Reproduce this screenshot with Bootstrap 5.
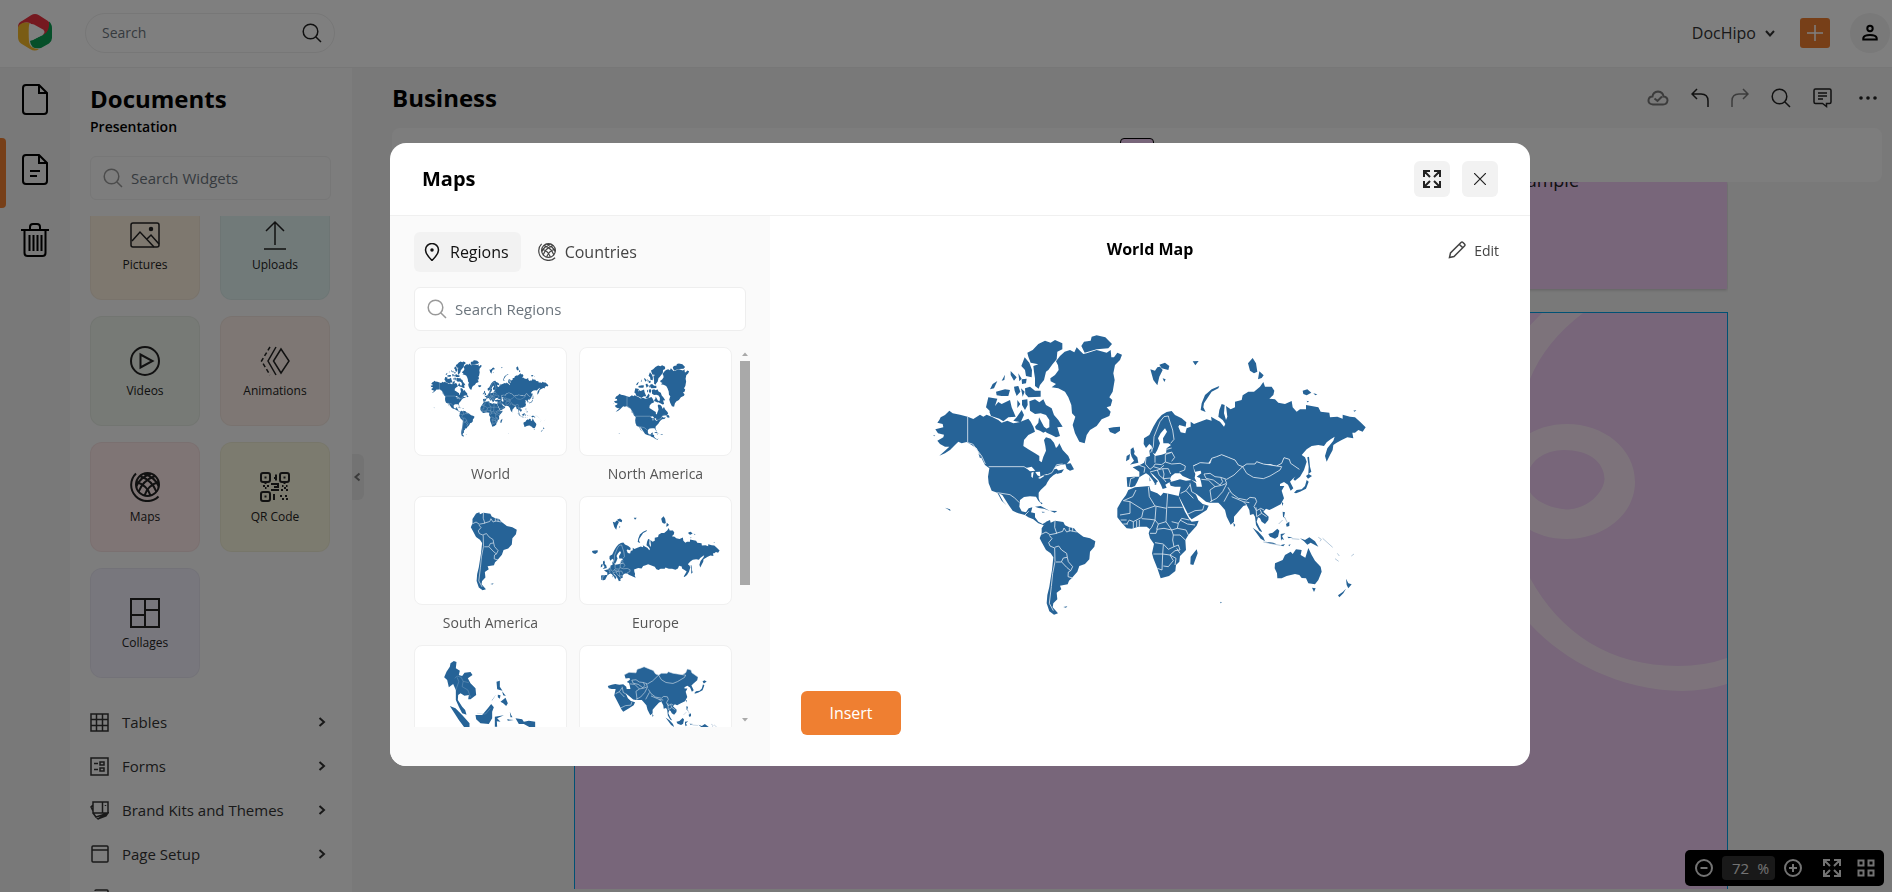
<!DOCTYPE html>
<html lang="en">
<head>
<meta charset="utf-8">
<meta name="viewport" content="width=device-width, initial-scale=1">
<title>DocHipo – Business</title>
<link rel="stylesheet" href="https://cdn.jsdelivr.net/npm/bootstrap@5.3.0/dist/css/bootstrap.min.css">
<style>
  body { font-family: "Open Sans", "Noto Sans", sans-serif; font-size: 14px; color: #222; background: #f2f2f2; height: 100vh; overflow: hidden; }
  svg { display: block; flex: none; }
  .ico { fill: none; stroke: currentColor; stroke-width: 1.5; }
  .ico-bold { stroke-width: 2; }
  .bare { border: 0; background: none; padding: 0; color: inherit; }
  input::placeholder { color: #6c757d; opacity: 1; }
  input:focus { outline: 0; }

  .topbar { height: 68px; background: #fff; border-bottom: 1px solid #eee; padding: 0 2px 2px 18px; }
  .top-search { width: 250px; height: 40px; margin-left: 33px; padding: 0 12px 0 16px; border: 1px solid #eee; border-radius: 20px; }
  .plain-input { border: 0; background: transparent; min-width: 0; padding: 0; color: #222; }
  .account { font-size: 16px; color: #333; }
  .add-btn { width: 30px; height: 30px; border-radius: 3px; background: #ef7f31; color: #fff; }
  .avatar { width: 40px; height: 40px; margin-left: 20px; background: #f2f2f2; color: #000; }

  .rail { width: 70px; background: #f2f2f2; color: #000; }
  .rail a { height: 70px; padding-bottom: 7px; color: #000; position: relative; }
  .rail a.current::before { content: ""; position: absolute; left: 0; top: 0; bottom: 0; width: 6px; background: #ef7f31; border-radius: 0 4px 4px 0; }

  .side { width: 282px; background: #fbfbfb; padding: 15px 20px 0; position: relative; }
  .side h1, .main h2 { font-size: 24px; line-height: 32px; font-weight: 700; color: #000; }
  .side .kind { font-size: 14px; line-height: 20px; margin-top: 2px; font-weight: 600; color: #000; }
  .widget-search { height: 44px; border: 1px solid #eee; border-radius: 6px; padding: 0 12px; font-size: 15px; color: #999; margin: 19px 1px 16px 0; }
  .side-scroll { overflow: hidden; }
  .tiles { display: grid; grid-template-columns: 110px 110px; gap: 16px 20px; margin-top: -26px; }
  .tile { height: 110px; border: 1px solid rgba(0,0,0,.04); border-radius: 12px; font-size: 12px; line-height: 16px; color: #222; gap: 7px; padding: 3px 0 0; }
  .t-pic { background: #fcf0df; } .t-up { background: #e3f5f3; } .t-vid { background: #eef4ec; } .t-ani { background: #fcefe8; }
  .t-map { background: #ffeaea; } .t-qr { background: #f9f7de; } .t-col { background: #f1effb; }
  .menu-list { margin-top: 22px; }
  .menu-row { height: 44px; font-size: 15px; color: #333; gap: 13px; text-decoration: none; padding-right: 5px; }
  .fold { position: absolute; left: 100%; top: 386px; width: 12px; height: 46px; background: #e6e6e6; border-radius: 0 6px 6px 0; color: #777; }

  .main { padding: 0 10px 0 40px; }
  .main-head { height: 60px; padding-right: 4px; color: #222; gap: 22px; }
  .toolbar { height: 54px; background: #fbfbfb; border-radius: 8px; padding-top: 10px; position: relative; z-index: 1; }
  .chip { width: 34px; height: 30px; border: 1px solid #000; border-radius: 4px; background: #f0ccf4; }
  .slides { margin: 0 154px 0 182px; min-height: 0; overflow: hidden; }
  .slide-a { height: 107px; background: #f0ccf4; box-shadow: 0 1px 3px rgba(0,0,0,.2); padding-right: 148px; font-size: 18px; line-height: 24px; color: #222; overflow: hidden; margin-right: 1px; }
  .slide-a p { margin-top: -14px; }
  .slide-b { height: 577px; margin-top: 23px; background: #f0ccf4; border: 1px solid #00a2e8; border-bottom: 0; position: relative; overflow: hidden; }
  .slide-b svg { position: absolute; right: 0; top: 0; }

  .zoombar { position: fixed; right: 8px; bottom: 6px; height: 36px; background: #000; border-radius: 5px; color: #e6e6e6; padding: 0 9px; z-index: 2; }
  .zoombar label { width: 53px; height: 24px; background: #333; border-radius: 4px; font-size: 14px; margin: 0 8px; padding: 0 6px 0 10px; }
  .zoombar input { width: 19px; color: #e6e6e6; font-size: 15px; }

  .maps { padding: 17px 0 0 28px; overflow: hidden; }
  .maps .modal-content { border: 0; border-radius: 16px; overflow: hidden; color: #222; }
  .maps .modal-header { padding: 18px 32px; height: 73px; border-bottom: 1px solid #f0f0f0; }
  .maps .modal-title { font-size: 20px; line-height: 28px; font-weight: 700; color: #000; }
  .sq { width: 36px; height: 36px; background: #f2f2f2; border-radius: 6px; color: #222; }
  .picker { width: 380px; background: #fafafa; padding: 16px 20px 39px 24px; }
  .tab { height: 40px; border-radius: 6px; font-size: 16px; color: #444; gap: 9px; padding: 0 12px 0 9px; }
  .tab.on { background: #f2f2f2; color: #111; }
  .region-search { height: 44px; background: #fff; border: 1px solid #eee; border-radius: 6px; padding: 0 12px; font-size: 15px; color: #999; margin: 15px 4px 16px 0; gap: 8px; }
  .regions { height: 380px; overflow: hidden; display: grid; grid-template-columns: 153px 153px; grid-auto-rows: 149px; column-gap: 12px; }
  .region { display: flex; flex-direction: column; align-items: center; font-size: 14px; line-height: 20px; color: #555; }
  .region svg { width: 100%; height: 109px; background: #fff; border: 1px solid #f0f0f0; border-radius: 8px; margin-bottom: 8px; }
  .track { width: 10px; height: 380px; color: #a9a9a9; }
  .track i { width: 10px; height: 224px; background: #a9a9a9; }
  .preview { padding: 22px 31px 31px; }
  .preview-head { display: grid; grid-template-columns: 1fr auto 1fr; height: 24px; }
  .preview h3 { grid-column: 2; font-size: 16px; line-height: 22px; font-weight: 700; color: #000; }
  .preview .world { margin-top: 58px; }
  .edit { height: 24px; font-size: 14px; gap: 8px; color: #444; }
  .insert { width: 100px; height: 44px; border: 0; border-radius: 6px; background: #ef7f31; color: #fff; font-size: 16px; }
  .land { fill: #266397; }
  .lines { fill: none; stroke: #dfe8f0; stroke-width: 2.5; stroke-linejoin: round; }
</style>
</head>
<body class="d-flex flex-column">

<!-- shared shapes -->
<svg width="0" height="0" class="position-absolute" aria-hidden="true">
  <defs>
    <symbol id="s-search" viewBox="0 0 20 20"><path d="M8.500 1.200a7.300 7.300 0 1 0 0 14.600a7.300 7.300 0 1 0 0-14.600M13.700 13.700L19 19"/></symbol>
    <symbol id="s-right" viewBox="0 0 10 12"><path d="M2.500 2l4.500 4l-4.500 4"/></symbol>
    <symbol id="s-globe" viewBox="0 0 30 30">
      <circle cx="17.500" cy="12.500" r="11.500"/><path d="M6 1.500A15 15 0 0 0 28.500 24.500"/>
      <path d="M10 4C18 7 24 13 26.500 20M6.500 10C13 12 18.500 17 20.500 23.500M14 1.800C21 4 26 8 28.500 14M25 4C17 7 11 13 8.500 20M28.500 10C22 12 16.500 17 14.500 23.500M21 1.800C14 4 9 8 6.500 14"/>
    </symbol>
    <symbol id="s-expand" viewBox="0 0 18 18"><path d="M1 7V1h6M1 1l6 6M11 1h6v6M17 1l-6 6M1 11v6h6M1 17l6-6M17 11v6h-6M17 17l-6-6"/></symbol>

    <g id="north" class="land">
      <path d="M62,292L75,285L88,272L98,280L120,284L143,290L160,297L180,284L190,290L200,284L215,290L235,300L245,308L262,302L280,310L300,306L315,300L325,296L332,305L340,320L345,335L325,345L312,360L310,378L325,388L345,400L358,408L358,422L365,427L370,410L378,392L376,378L372,360L378,352L392,356L402,368L408,384L414,378L418,370L428,390L445,408L450,420L440,432L425,434L410,438L400,448L410,446L418,455L400,466L390,475L382,487L378,495L362,510L356,518L356,535L361,548L355,542L348,530L330,529L312,531L300,540L298,560L305,574L318,577L326,565L337,562L333,577L345,580L345,592L355,605L368,612L378,606L372,616L355,610L340,598L325,592L315,585L295,580L278,572L268,558L255,538L247,525L236,520L250,545L260,556L245,542L232,518L215,512L206,490L204,470L208,445L195,435L190,425L180,405L170,385L150,372L140,366L125,370L115,365L105,375L90,390L75,400L58,407L75,392L88,380L75,380L60,372L52,362L70,352L72,344L54,340L46,328L70,322L68,312L52,308L58,300Z"/>
      <path d="M205,232L232,236L225,258L210,274L198,262ZM225,258L235,246L245,252L270,240L275,262L287,290L265,292L250,304L238,296L213,288L208,275ZM228,215L255,208L270,210L265,228L245,228L230,226ZM210,208L218,192L232,183L222,205ZM245,182L255,164L253,180ZM272,153L290,172L282,182L272,165ZM282,200L295,198L301,215L290,228L284,212ZM295,160L305,176L298,184ZM305,178L320,176L318,190L306,192ZM315,205L330,200L345,212L362,212L362,230L325,232L316,222ZM303,205L314,215L308,230ZM292,240L301,252L292,264ZM306,240L322,238L323,255L315,270L306,255ZM290,292L305,270L312,285L302,307L280,302Z"/>
      <path d="M328,244L345,238L358,247L370,238L378,255L395,265L402,285L415,300L428,320L412,322L420,348L408,352L395,345L380,338L372,330L388,322L388,300L378,285L362,280L345,282L330,272ZM345,320L355,308L357,292L372,320L385,330L370,338L360,332L348,328Z"/>
      <path d="M355,72L375,62L392,68L405,60L427,70L427,88L412,95L410,118L398,132L385,150L378,155L372,180L360,195L356,206L345,198L345,175L342,155L340,138L355,133L332,128L325,110L322,98L338,90ZM314,112L328,128L336,150L335,172L318,168L315,150L304,138Z"/>
      <path d="M436,432L452,430L462,448L450,452L440,446ZM412,452L432,448L425,458L410,462ZM345,560L362,558L380,568L390,573L372,566L356,564ZM390,572L412,573L404,578ZM365,575L376,576L368,578ZM360,545L368,550L364,553ZM40,345L46,347L42,349ZM75,563L90,568L92,573ZM175,400L184,412L180,415Z"/>
      <path d="M391,175L405,165L416,150L414,136L408,124L420,108L434,95L450,90L463,97L470,82L480,92L490,102L500,100L530,90L560,98L572,90L574,112L582,112L592,98L606,104L600,120L585,135L580,160L584,180L578,215L568,232L577,240L572,258L560,262L572,275L568,288L545,298L530,318L510,330L500,345L494,370L478,365L465,340L458,315L466,290L456,280L454,255L445,232L435,215L415,205L395,202L408,192L392,184ZM494,98L484,78L492,65L512,62L515,50L530,46L556,52L576,72L565,85L530,88Z"/>
      <path fill="#fff" d="M318,444L335,440L346,452L330,454ZM334,458L341,455L338,474L334,470ZM346,456L360,455L361,470L352,466ZM354,474L370,466L372,469L360,476ZM368,466L382,462L382,465Z"/>
      <path class="lines" d="M143,290V368L158,372L185,408L196,432M206,440H312L322,446M382,464L396,458L410,434L428,432M232,518L270,524L284,534L298,548M315,585L326,574"/>
    </g>

    <g id="south" class="land">
      <path d="M365,625L378,605L390,600L392,608L405,602L430,606L435,616L448,622L462,625L470,635L490,650L510,655L526,664L523,680L510,695L508,718L495,732L478,738L472,755L455,775L447,782L443,793L420,797L424,808L410,818L412,838L400,850L398,862L414,880L402,884L388,874L380,850L382,825L388,800L392,775L396,750L400,712L392,700L378,690L366,668L359,655L365,640ZM430,861L442,859L438,863Z"/>
      <path class="lines" d="M405,602L404,622L410,640L390,644L378,636L364,643M408,640L428,634L432,624L440,636L450,632L470,636M448,622V634M458,624V634M388,646L396,656L386,668L390,678L404,684L405,725L398,760L394,800L388,850L400,872M404,682L416,678L425,690L440,700L442,712L430,714L424,726L408,726M442,712L445,725L458,740L452,752L440,742L425,726M452,752L445,756L444,770L458,774"/>
    </g>

    <g id="europe" transform="translate(540)" class="land">
      <path d="M82,500L80,472L102,470L118,470L118,455L98,442L118,436L132,428L138,412L150,408L148,392L154,385L158,398L165,408L185,404L198,400L200,385L213,375L205,370L190,370L189,355L201,335L195,325L182,340L174,355L180,370L172,390L165,402L158,398L155,378L148,372L138,384L131,372L132,355L148,345L160,320L172,300L185,285L200,276L215,273L225,285L245,295L259,307L257,320L238,315L235,320L242,337L256,340L260,325L272,320L272,305L282,312L300,305L320,298L335,302L333,290L350,300L360,305L372,320L376,312L368,300L355,290L358,270L365,252L374,255L372,280L378,300L382,290L378,258L392,268L405,262L405,245L425,240L428,226L445,215L462,215L480,200L490,186L495,200L515,200L523,212L520,225L508,236L525,238L535,248L555,252L575,243L578,262L590,275L600,268L618,268L618,255L655,262L662,275L688,278L690,292L712,290L728,296L728,284L750,290L765,292L780,305L797,322L788,335L775,330L765,338L757,338L760,355L742,352L725,360L710,368L700,375L698,390L690,405L680,425L675,408L682,385L700,362L704,350L692,358L680,367L672,378L655,375L635,378L620,388L605,405L615,412L620,425L612,450L600,470L585,482L580,478L598,448L585,440L570,430L568,418L552,413L545,430L530,438L510,432L490,432L470,425L465,432L440,432L428,440L415,435L405,420L385,412L365,404L350,410L335,415L325,430L305,428L280,436L282,452L286,462L284,474L290,486L275,480L262,474L248,468L240,460L225,460L214,468L210,478L214,484L203,490L196,494L200,503L188,507L183,495L175,480L160,464L150,457L160,470L174,484L165,492L158,480L146,465L138,460L130,464L118,472L112,485L105,498L95,502ZM148,470L152,482L149,484ZM162,492L170,490L168,495Z"/>
      <path d="M25,325L40,322L60,320L60,332L45,342L30,336ZM92,388L100,382L104,395L102,402L112,412L115,428L98,432L90,434L102,422L95,410L92,400ZM80,408L90,402L88,418L78,424ZM151,148L165,152L172,142L180,140L188,150L178,170L172,196L160,180ZM178,134L195,128L208,138L205,150L185,145ZM188,175L197,178L193,186ZM278,124L296,123L286,136ZM302,270L305,250L315,225L335,208L358,198L355,205L335,215L322,235L312,250L310,262L317,276ZM444,130L458,114L468,130L472,155L462,160L450,152ZM474,178L478,154L491,166L485,174ZM608,212L622,208L634,218L620,226L610,222ZM640,220L652,223L646,226ZM620,242L628,245L622,247ZM760,272L769,270L764,275ZM622,412L627,410L630,440L634,455L625,462L626,440Z"/>
      <path class="lines" d="M152,398L160,380L162,350L170,330L180,305L192,290L205,288M205,288L208,300L218,330L222,358L212,370M138,412L136,432L150,448L160,440L165,432L185,434L196,426L196,404M165,408L165,428M118,436L135,442L132,458M196,426L215,432L240,430L256,438L254,450L238,456M196,404L215,396L224,412L215,424M160,440L180,446L192,436M150,456L172,450L188,446L205,446L212,462M172,450L178,466L190,476L212,474M188,446L192,462L190,476L198,486M104,472L92,476L88,500M200,388L215,384M198,400L214,398"/>
    </g>

    <g id="asia" transform="translate(540)" class="land">
      <path d="M208,487L225,482L240,478L258,482L275,480L288,490L290,500L306,500L303,485L300,474L290,470L304,460L302,452L285,455L280,438L300,428L330,430L335,415L350,410L365,404L385,412L405,420L415,435L428,440L440,432L465,432L470,425L490,432L530,438L545,430L552,413L568,418L572,430L598,448L595,462L580,475L570,485L580,505L572,512L564,494L552,486L540,492L540,498L553,498L545,512L552,535L542,553L522,563L508,570L498,566L490,575L506,590L505,600L495,612L485,605L480,595L474,592L470,605L478,622L487,636L478,632L468,615L465,590L460,582L450,585L448,570L440,555L430,558L415,575L402,590L402,605L392,614L380,590L375,570L362,555L355,548L330,548L318,545L300,530L286,520L295,540L308,552L326,557L320,570L300,583L275,598L268,590L245,545L236,528L242,500L225,500L212,497Z"/>
      <path d="M400,608L406,615L402,621ZM582,518L590,510L605,508L615,498L620,480L626,485L618,506L600,515L588,520ZM618,468L626,462L636,468L624,476ZM458,623L475,635L490,652L495,664L482,656L470,640ZM505,642L518,638L532,626L538,632L534,650L525,656L510,650ZM495,665L520,668L530,673L512,671ZM542,642L556,640L546,648L552,660L546,657L543,662ZM548,575L555,577L552,590L558,596L549,590ZM558,612L568,605L568,618L560,620ZM600,655L615,660L628,652L645,664L655,680L632,668L622,674L612,664ZM545,545L550,550L547,558ZM562,650L578,652L566,655ZM540,676L555,672L550,679ZM565,675L572,673L568,679Z"/>
      <path fill="none" stroke="#8fadc8" stroke-width="2" d="M536,612L548,600M554,592L562,608M575,656L598,658M655,652L664,658L660,664M668,655L698,682M490,666L540,676"/>
      <path class="lines" d="M280,438L300,428L330,430L335,415L350,410L365,404L385,412L405,420L415,435L428,440L440,432L465,432L470,425L490,432L530,438L545,430L552,413L568,418L572,430L598,448M312,462L330,460L345,470L362,472L380,478L402,465L428,440M428,440L440,460L460,472L490,476L510,468L540,450L545,440L530,438M312,462L318,475L340,480L360,495L368,485L362,472M304,478L325,480L345,500L330,510L335,545M345,500L365,496L380,490L375,478M380,492L368,515L350,535L330,545M384,502L395,520L415,535L440,540L450,532L466,534L470,545L462,560L470,572L482,565L492,570M372,545L388,515M395,530L430,545L440,555M430,545L448,548M270,490L275,515L292,525M242,520L258,512L270,495M258,512L280,535M262,583L285,572L308,570L312,556M468,562L470,590L485,580L480,568M485,580L500,590"/>
    </g>

    <g id="africa" transform="translate(540)" class="land">
      <path d="M85,510L105,502L148,498L152,512L172,520L182,528L190,518L210,522L236,528L240,540L255,575L268,598L275,605L296,602L290,617L265,645L256,660L258,690L240,708L238,725L228,735L226,753L207,768L182,775L172,745L160,715L156,700L162,672L150,655L146,640L150,628L140,620L115,620L95,626L80,625L65,608L52,592L52,565L65,542L78,525ZM290,688L293,700L280,735L271,733L272,710Z"/>
      <path class="lines" d="M108,510L98,530L70,542L90,545L90,580L60,585M90,545L130,570L165,558L148,530L145,500M165,558L200,565L203,520M203,562H248M200,565L198,605L175,612L165,600L168,560M130,570L125,592L100,605L88,600L80,612M100,605V625M110,602V622M118,600V620M125,596L150,598L165,600M165,600L155,622L148,630M175,612L170,628L192,625L215,630L198,605M215,605L235,610L232,625L215,630L220,645L218,660L222,680L205,688L190,672L165,668M235,610L245,595L268,600M240,600L262,612L285,615M232,625L258,630L265,645M220,645H240L256,660M160,702H188L190,675M188,702L186,750L172,745M188,702L210,705L225,692L240,690L235,675L222,680M210,705L228,715L225,735M190,738L205,740L220,722L210,705M240,700L230,685M62,600L80,600M70,612L84,612M150,640H168L172,628"/>
    </g>

    <g id="oceania" transform="translate(540)" class="land">
      <path d="M525,730L548,720L555,705L572,695L578,702L588,688L605,690L602,705L616,713L625,684L635,705L645,722L662,740L665,755L655,780L645,793L625,790L618,775L605,774L598,765L585,762L560,768L545,775L532,775L531,760L524,745ZM636,803L647,805L642,816ZM738,776L745,790L755,793L745,805L740,795ZM738,806L730,820L718,832L714,826L728,816ZM360,845L366,848L362,850Z"/>
      <path fill="none" stroke="#8fadc8" stroke-width="2" d="M705,716L716,724M712,700L718,708M754,708L762,702"/>
    </g>
  </defs>
</svg>

<header class="topbar d-flex align-items-center flex-shrink-0">
  <a href="#" aria-label="Home">
    <svg width="34" height="37" viewBox="0 0 34 37"><path fill="#ea3340" d="M0 14C0 10 1 8.500 4 7L13 1.200Q17 -1 21 1.200L30 7Q33 9 32 14Q30 20 25 21L12 9Q5 7 0 14Z"/><path fill="#f5b829" d="M0 13Q3 7 12 9Q10 10 11 28Q12 35 21 35Q17 38 12 35L3 29.500Q0 27 0 23Z"/><path fill="#0c9e52" d="M31 7.500Q34 10 34 14V24Q34 27 31 29.500L23 34Q13 36 12 27L25 21Q32 18 31 7.500Z"/><path fill="#fff" d="M11.500 13Q12 8.500 16 10.500L25 15.500Q28 18 25 20.500L15 26Q11.500 27 11.500 23Z"/></svg>
  </a>
  <div class="top-search d-flex align-items-center">
    <input class="plain-input flex-grow-1" type="text" placeholder="Search" aria-label="Search">
    <button class="bare" aria-label="Search"><svg class="ico" width="20" height="20"><use href="#s-search"/></svg></button>
  </div>
  <button class="bare account ms-auto d-flex align-items-center me-4">DocHipo
    <svg class="ico ico-bold ms-2" width="12" height="12" viewBox="0 0 12 12"><path d="M2 4l4 4.500l4-4.500"/></svg></button>
  <button class="bare add-btn d-flex align-items-center justify-content-center" aria-label="Add"><svg class="ico" width="18" height="18" viewBox="0 0 18 18"><path d="M9 1v16M1 9h16"/></svg></button>
  <button class="bare avatar rounded-circle d-flex align-items-center justify-content-center" aria-label="Account"><svg class="ico ico-bold" width="18" height="18" viewBox="0 0 18 18"><circle cx="9" cy="4.500" r="2.700"/><path d="M2.300 15.500v-1.500c1-4 12.400-4 13.400 0v1.500z"/></svg></button>
</header>

<div class="d-flex flex-grow-1 overflow-hidden">
  <nav class="rail d-flex flex-column flex-shrink-0" aria-label="Sections">
    <a href="#" class="d-flex align-items-center justify-content-center" aria-label="Files"><svg class="ico ico-bold" width="26" height="31" viewBox="0 0 26 31"><path d="M4 1h13l8 8v18q0 3-3 3H4q-3 0-3-3V4q0-3 3-3zM17 1v8h8"/></svg></a>
    <a href="#" class="current d-flex align-items-center justify-content-center" aria-label="Documents"><svg class="ico ico-bold" width="26" height="31" viewBox="0 0 26 31"><path d="M4 1h13l8 8v18q0 3-3 3H4q-3 0-3-3V4q0-3 3-3zM17 1v8h8M8 17h10M8 22h7"/></svg></a>
    <a href="#" class="d-flex align-items-center justify-content-center" aria-label="Trash"><svg class="ico ico-bold" width="28" height="34" viewBox="0 0 28 34"><path d="M0 7h28M3.500 7v23q0 3 3 3h15q3 0 3-3V7M9 7V4q0-3 3-3h4q3 0 3 3v3M8.500 12v16M12.500 12v16M16.500 12v16M20.500 12v16"/></svg></a>
  </nav>

  <aside class="side d-flex flex-column flex-shrink-0">
    <h1 class="mb-0">Documents</h1>
    <div class="kind">Presentation</div>
    <div class="widget-search d-flex align-items-center gap-2 flex-shrink-0">
      <svg class="ico" width="20" height="20"><use href="#s-search"/></svg>
      <input class="plain-input flex-grow-1" type="text" placeholder="Search Widgets" aria-label="Search Widgets">
    </div>
    <div class="side-scroll flex-grow-1">
      <div class="tiles">
        <button class="tile t-pic d-flex flex-column align-items-center justify-content-center"><svg class="ico" width="30" height="30" viewBox="0 0 30 30"><rect x="1" y="3" width="28" height="24" rx="2"/><circle cx="21" cy="9" r="1.500" fill="currentColor"/><path d="M2 21l8-9l14 15M17 19l4-4l8 9"/></svg>Pictures</button>
        <button class="tile t-up d-flex flex-column align-items-center justify-content-center"><svg class="ico" width="30" height="30" viewBox="0 0 30 30"><path d="M15 25V2M6 11l9-9l9 9M4 29h22"/></svg>Uploads</button>
        <button class="tile t-vid d-flex flex-column align-items-center justify-content-center"><svg class="ico ico-bold" width="30" height="30" viewBox="0 0 30 30"><circle cx="15" cy="15" r="14"/><path d="M10.500 8.500v13l12-6.500z"/></svg>Videos</button>
        <button class="tile t-ani d-flex flex-column align-items-center justify-content-center"><svg class="ico" width="30" height="30" viewBox="0 0 30 30"><path d="M21 3l8 12l-8 12l-7.500-12zM16 1L8 15l8 14"/><path stroke-dasharray="4 2.500" d="M10 1L1.500 15L10 29"/></svg>Animations</button>
        <button class="tile t-map d-flex flex-column align-items-center justify-content-center"><svg class="ico ico-bold" width="30" height="30"><use href="#s-globe"/></svg>Maps</button>
        <button class="tile t-qr d-flex flex-column align-items-center justify-content-center"><svg class="ico ico-bold" width="30" height="30" viewBox="0 0 30 30"><rect x="1" y="1" width="9" height="9" rx="2"/><rect x="20" y="1" width="9" height="9" rx="2"/><rect x="1" y="20" width="9" height="9" rx="2"/><path d="M4.500 5.500h2M23.500 5.500h2M4.500 24.500h2M14 6h3M16 2.500v6M5.500 10v2M3 14h2M7 14h2M5 16h1.500M11 12h8M18 12v3h-4M11 18h8M14 22v6M24.500 10v2M22 14h1.500M26 14h1.500M21 18h2M24 16h2M26 18h2M20 24h2M25 24h2M22 27h2M26 27h2"/></svg>QR Code</button>
        <button class="tile t-col d-flex flex-column align-items-center justify-content-center"><svg class="ico ico-bold" width="30" height="30" viewBox="0 0 30 30"><path d="M1 1h28v28H1zM15 1v28M1 17h14M15 12h14"/></svg>Collages</button>
      </div>
      <div class="menu-list">
        <a href="#" class="menu-row d-flex align-items-center"><svg class="ico" width="19" height="19" viewBox="0 0 19 19"><path d="M1 1h17v17H1zM1 6.500h17M1 12.500h17M6.500 1v17M12.500 1v17"/></svg>Tables<svg class="ico ico-bold ms-auto" width="10" height="12"><use href="#s-right"/></svg></a>
        <a href="#" class="menu-row d-flex align-items-center"><svg class="ico" width="19" height="19" viewBox="0 0 19 19"><path d="M1 1h17v17H1zM10 5h4v3h-4zM10 11h4v3h-4zM4 6.500h4M4 12.500h4"/></svg>Forms<svg class="ico ico-bold ms-auto" width="10" height="12"><use href="#s-right"/></svg></a>
        <a href="#" class="menu-row d-flex align-items-center"><svg class="ico" width="19" height="19" viewBox="0 0 19 19"><path d="M3 1h15v11H3zM12.500 1v11M15.500 4v1M3 4L1 6l2 4M3 12l3 4l12-4l-2 3l-8 3l-3-3M8 18l8-5"/></svg>Brand Kits and Themes<svg class="ico ico-bold ms-auto" width="10" height="12"><use href="#s-right"/></svg></a>
        <a href="#" class="menu-row d-flex align-items-center"><svg class="ico" width="19" height="19" viewBox="0 0 19 19"><path d="M2 2q0-1 1-1h14q1 0 1 1v14q0 1-1 1H3q-1 0-1-1zM2 5h16"/></svg>Page Setup<svg class="ico ico-bold ms-auto" width="10" height="12"><use href="#s-right"/></svg></a>
        <a href="#" class="menu-row d-flex align-items-center" aria-label="More settings"><svg class="ico" width="19" height="19" viewBox="0 0 19 19"><path d="M5 2q0-1 1-1h11q1 0 1 1v16M5 4H2q-1 0-1 1v13"/></svg></a>
      </div>
    </div>
    <button class="bare fold d-flex align-items-center" aria-label="Collapse panel"><svg class="ico ico-bold" width="10" height="12" viewBox="0 0 10 12"><path d="M7.500 2.500L3.500 6l4 3.500"/></svg></button>
  </aside>

  <main class="main d-flex flex-column flex-grow-1">
    <div class="main-head d-flex align-items-center flex-shrink-0">
      <h2 class="mb-0 me-auto">Business</h2>
      <svg class="ico text-black-50" width="22" height="18" viewBox="0 0 22 18"><path stroke-width="2" d="M6 15.500Q1 15 1.500 11Q2 7.500 5.500 7.500Q6 3 11 2.500Q16 3 16.500 7.500Q20.500 8 20.500 11.500Q20 15.500 16 15.500ZM7.500 9.500l3 2.500l4.500-4.500"/></svg>
      <button class="bare" aria-label="Undo"><svg class="ico" width="18" height="20" viewBox="0 0 18 20"><path d="M6 1L1 6l5 5M1 6h9q7 0 7 7v6"/></svg></button>
      <button class="bare text-black-50" aria-label="Redo"><svg class="ico" width="18" height="20" viewBox="0 0 18 20"><path d="M12 1l5 5l-5 5M17 6H8q-7 0-7 7v6"/></svg></button>
      <button class="bare" aria-label="Find"><svg class="ico" width="20" height="20"><use href="#s-search"/></svg></button>
      <button class="bare" aria-label="Comments"><svg class="ico" width="19" height="20" viewBox="0 0 19 20"><path d="M2.500 1h14q1.500 0 1.500 1.500v11.500q0 1.500-1.500 1.500H13.500v3l-4-3h-7q-1.500 0-1.500-1.500v-11.500q0-1.500 1.500-1.500zM5 5h9M5 8h9M5 11h5"/></svg></button>
      <button class="bare ms-1" aria-label="More"><svg width="20" height="6" viewBox="0 0 20 6" fill="currentColor"><circle cx="3" cy="3" r="1.800"/><circle cx="10" cy="3" r="1.800"/><circle cx="17" cy="3" r="1.800"/></svg></button>
    </div>
    <div class="toolbar d-flex align-items-start justify-content-center flex-shrink-0"><button class="chip" aria-label="Colour"></button></div>
    <div class="slides">
      <div class="slide-a text-end"><p class="mb-0">Example</p></div>
      <div class="slide-b">
        <svg width="227" height="576" viewBox="1500 313 227 576"><g fill="#fff3f8" opacity=".7">
          <path fill-rule="evenodd" d="M1567 424C1603 424 1635 448 1635 482C1635 515 1603 539 1567 539C1530 539 1500 515 1500 482C1500 448 1530 424 1567 424ZM1564 450C1588 450 1604 461 1604.500 479C1604 492 1588 509.500 1566 509.500C1545 507 1527 498 1527 481C1527 461 1545 450 1564 450Z"/>
          <path d="M1542 313H1583Q1545 342 1530 379Q1505 450 1512 520Q1520 560 1530 578C1560 633 1610 666 1678 666Q1705 666 1727 658V684Q1705 691 1682 691C1620 690 1565 662 1530 624L1500 590V360Q1520 335 1542 313Z"/></g></svg>
      </div>
    </div>
  </main>
</div>

<div class="zoombar d-flex align-items-center">
  <button class="bare" aria-label="Zoom out"><svg class="ico ico-bold" width="20" height="20" viewBox="0 0 20 20"><circle cx="10" cy="10" r="8"/><path d="M6.500 10h7"/></svg></button>
  <label class="d-flex align-items-center justify-content-between"><input class="plain-input" type="text" value="72" aria-label="Zoom percent"><span>%</span></label>
  <button class="bare" aria-label="Zoom in"><svg class="ico ico-bold" width="20" height="20" viewBox="0 0 20 20"><circle cx="10" cy="10" r="8"/><path d="M6 10h8M10 6v8"/></svg></button>
  <div class="d-flex ms-3 gap-3 ps-1">
    <button class="bare" aria-label="Full screen"><svg class="ico ico-bold" width="18" height="18"><use href="#s-expand"/></svg></button>
    <button class="bare" aria-label="Grid view"><svg class="ico ico-bold" width="18" height="18" viewBox="0 0 18 18"><path d="M1.500 1.500h5v5h-5zM11.500 1.500h5v5h-5zM1.500 11.500h5v5h-5zM11.500 11.500h5v5h-5z"/></svg></button>
  </div>
</div>

<div class="modal-backdrop show"></div>
<div class="modal maps d-block" tabindex="-1" role="dialog" aria-labelledby="mapsTitle">
  <div class="modal-dialog modal-xl modal-dialog-centered">
    <div class="modal-content">
      <div class="modal-header">
        <h2 class="modal-title" id="mapsTitle">Maps</h2>
        <div class="d-flex column-gap">
          <button class="bare sq d-flex align-items-center justify-content-center me-2" aria-label="Expand"><svg class="ico ico-bold" width="18" height="18"><use href="#s-expand"/></svg></button>
          <button class="bare sq d-flex align-items-center justify-content-center ms-1" aria-label="Close"><svg class="ico" width="12" height="12" viewBox="0 0 12 12"><path stroke-width="1.200" d="M0 0l12 12M12 0L0 12"/></svg></button>
        </div>
      </div>
      <div class="d-flex">
        <section class="picker flex-shrink-0">
          <div class="d-flex gap-2">
            <button class="bare tab on d-flex align-items-center"><svg class="ico" width="18" height="18" viewBox="0 0 18 18"><path d="M9 17.500Q2.500 11 2.500 7A6.500 6.500 0 0 1 15.500 7Q15.500 11 9 17.500Z"/><circle cx="9" cy="7" r="1" fill="currentColor"/></svg>Regions</button>
            <button class="bare tab d-flex align-items-center"><svg class="ico ico-bold" width="18" height="18"><use href="#s-globe"/></svg>Countries</button>
          </div>
          <div class="region-search d-flex align-items-center">
            <svg class="ico" width="20" height="20"><use href="#s-search"/></svg>
            <input class="plain-input flex-grow-1" type="text" placeholder="Search Regions" aria-label="Search Regions">
          </div>
          <div class="d-flex justify-content-between">
            <div class="regions">
              <button class="bare region"><svg viewBox="-120 -87 1645 1173"><use href="#north"/><use href="#south"/><use href="#africa"/><use href="#europe"/><use href="#asia"/><use href="#oceania"/></svg>World</button>
              <button class="bare region"><svg viewBox="-204 -69 1119 798"><use href="#north"/></svg>North America</button>
              <button class="bare region"><svg viewBox="158 545 545 389"><use href="#south"/></svg>South America</button>
              <button class="bare region"><svg viewBox="496 -2 907 647"><use href="#europe"/></svg>Europe</button>
              <button class="bare region"><svg viewBox="75 558 450 321"><path class="land" d="M190,603L198,606L196,625L208,632L205,645L215,648L222,638L240,636L246,645L232,655L240,670L255,685L257,705L240,718L233,718L235,705L222,707L210,700L203,705L202,720L215,740L224,750L228,764L215,760L205,740L196,720L196,690L188,672L175,682L170,660L161,652L168,635L178,620L180,610ZM178,738L195,745L215,765L237,790L237,810L220,800L205,780L192,760ZM255,765L275,765L292,745L302,732L310,742L305,755L305,775L295,792L270,790L257,778ZM313,770L340,766L320,775L330,785L319,784L320,800L313,800ZM318,665L328,662L328,680L336,692L320,688ZM330,725L345,713L352,730L347,738L338,730ZM335,694L346,708L338,706ZM303,722L318,702L306,720ZM322,704L330,706L328,716L322,712ZM375,775L395,778L400,785L415,782L434,785L434,812L415,800L400,792L385,792ZM358,755L362,765L366,772L360,772ZM350,778L370,780L352,782Z"/><path fill="none" stroke="#9bb6ce" d="M193,655L200,648L212,652L218,664L235,668M196,690L205,665L200,652M218,664L215,680L232,690L240,712M260,760L285,762L300,745"/></svg>Southeast Asia</button>
              <button class="bare region"><svg viewBox="630 314 649 463"><use href="#asia"/></svg>Asia</button>
            </div>
            <div class="track d-flex flex-column align-items-center" aria-hidden="true">
              <svg width="10" height="14" viewBox="0 0 10 14" fill="currentColor"><path d="M2 9l3-3.500l3 3.500z"/></svg><i></i>
              <svg class="mt-auto" width="10" height="14" viewBox="0 0 10 14" fill="currentColor"><path d="M2 5l3 3.500l3-3.500z"/></svg>
            </div>
          </div>
        </section>
        <section class="preview flex-grow-1 d-flex flex-column">
          <div class="preview-head">
            <h3 class="mb-0">World Map</h3>
            <button class="bare edit d-flex align-items-center ms-auto"><svg class="ico" width="18" height="18" viewBox="0 0 18 18"><path d="M1.500 16.500l1-4.500L13 1.500q1-1 2 0l1.500 1.500q1 1 0 2L6 15.500zM11.500 3.500l3.500 3.500"/></svg>Edit</button>
          </div>
          <svg class="world mx-auto" width="460" height="310" viewBox="0 0 1380 930" role="img" aria-label="World map"><use href="#north"/><use href="#south"/><use href="#africa"/><use href="#europe"/><use href="#asia"/><use href="#oceania"/></svg>
          <button class="btn insert mt-auto">Insert</button>
        </section>
      </div>
    </div>
  </div>
</div>
<script src="https://cdn.jsdelivr.net/npm/bootstrap@5.3.0/dist/js/bootstrap.bundle.min.js"></script>
</body>
</html>
